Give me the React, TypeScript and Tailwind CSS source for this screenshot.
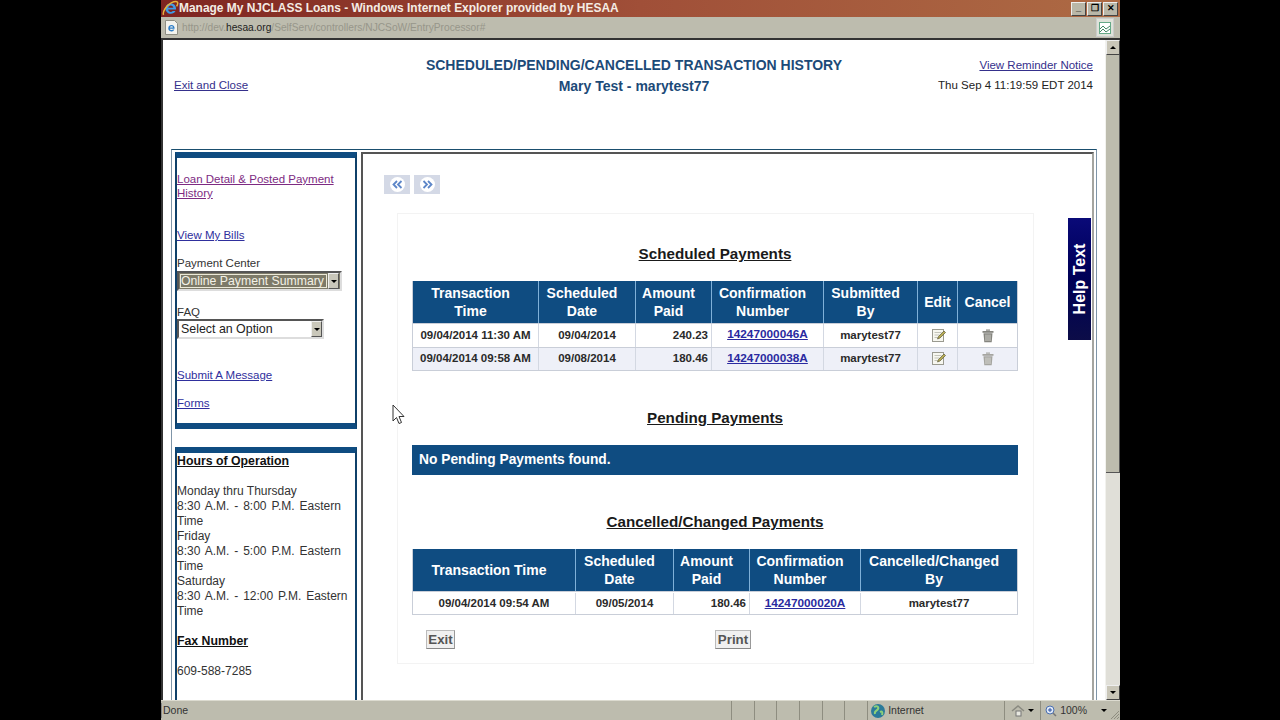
const font = { fontFamily: '"Liberation Sans", Arial, sans-serif' };

function IeLogo({ size = 17 }: { size?: number }) {
  return (
    <svg width={size} height={size} viewBox="0 0 16 16" className="shrink-0">
      <path d="M8.300 3a5 5 0 0 0-5 5c0 3 2.200 5 5 5 2 0 3.600-1 4.400-2.600h-2.600c-.5.600-1.100.9-1.800.9-1.300 0-2.400-.9-2.500-2.300h7.400V8a5 5 0 0 0-4.900-5zM5.900 7.200C6.100 6 7.100 5.100 8.300 5.100s2.200.9 2.400 2.100z" fill="#3f9be6" />
      <path d="M1.500 14C.2 11.500 4 5 9 2.500c3-1.500 5.800-1.700 5.800.5 0 1-.5 2-1 3" fill="none" stroke="#e8b33c" strokeWidth="1.400" />
    </svg>
  );
}

function PageLogo() {
  return (
    <svg width="15" height="17" viewBox="0 0 15 17" className="shrink-0">
      <path d="M1.500 1.500h9l3 3v11h-12z" fill="#f4f4ee" stroke="#8f8f84" />
      <path d="M7.500 6a3.200 3.200 0 1 0 2.900 4.500H8.800c-.3.400-.8.600-1.300.6-.9 0-1.500-.6-1.600-1.400h4.700c.2-2-1.200-3.700-3.100-3.700zM6 8.600c.1-.8.700-1.300 1.500-1.300s1.400.5 1.500 1.300z" fill="#2f7fc8" />
    </svg>
  );
}

function Dropdown({ label, w, dark, size }: { label: string; w: string; dark?: boolean; size: string }) {
  return (
    <div className={`${w} h-[20px] flex items-center border-2 border-t-[#555] border-l-[#555] border-r-[#ddd] border-b-[#ddd] ${dark ? "bg-[#7d7a68] p-px" : "bg-white"}`}>
      <div className={`flex-1 h-full flex items-center ${size} leading-none whitespace-nowrap ${dark ? "text-[#f3f1e6] border border-[#ece9d8]" : "text-[#222] pl-[2px]"}`}>{label}</div>
      <div className="w-[11px] h-[16px] ml-px bg-[#c9c7ba] border border-t-[#eee] border-l-[#eee] border-r-[#555] border-b-[#555] flex items-center justify-center">
        <div className="w-0 h-0 border-x-[3px] border-x-transparent border-t-[3px] border-t-black" />
      </div>
    </div>
  );
}

function EditIcon() {
  return (
    <svg width="16" height="15" viewBox="0 0 16 15" className="mx-auto block translate-x-px">
      <rect x="1.500" y="1.500" width="11" height="12" fill="#f7f7f0" stroke="#9a9a90" />
      <path d="M3.500 4.500h7M3.500 7h5M3.500 9.500h4" stroke="#c4c4ba" />
      <path d="M6.500 11l1-2.500 5.500-5.500 1.500 1.500-5.500 5.500z" fill="#b8ad55" stroke="#5e5a38" strokeWidth=".7" />
    </svg>
  );
}

function TrashIcon({ light }: { light?: boolean }) {
  const c = light ? "#a5a5a0" : "#85857f";
  return (
    <svg width="14" height="15" viewBox="0 0 14 15" className="mx-auto block">
      <path d="M5 1.500h4v1.200H5z" fill={c} />
      <path d="M1.500 3h11v1.800h-11z" fill={c} />
      <path d="M2.500 5.200h9l-.8 9H3.300z" fill={c} />
      <path d="M5 6.500v6.500M7 6.500v6.500M9 6.500v6.500" stroke="#e4e4e0" strokeWidth=".8" />
    </svg>
  );
}

function Th({ w, tight, children }: { w: string; tight?: boolean; children: React.ReactNode }) {
  return (
    <div className={`${w} shrink-0 h-full flex items-center justify-center text-center text-white font-bold text-[14px] leading-[18px] border-r border-[#7fb0d8] last:border-r-0 ${tight ? "" : "pr-[10px]"}`}>
      <span>{children}</span>
    </div>
  );
}

function Td({ w, right, children }: { w: string; right?: boolean; children: React.ReactNode }) {
  return (
    <div className={`${w} shrink-0 h-full flex items-center ${right ? "justify-end pr-[3px]" : "justify-center"} text-[11.500px] font-bold text-[#2a2a2a] border-r border-[#d3d8e2] last:border-r-0`}>
      {children}
    </div>
  );
}

function Conf({ n }: { n: string }) {
  return <a className="text-[11.800px] text-[#2a2aa0] underline">{n}</a>;
}

function Heading({ children }: { children: React.ReactNode }) {
  return <div className="text-center text-[15.200px] leading-[18px] font-bold text-[#1a1a1a] underline">{children}</div>;
}

function Scheduled() {
  const cols = ["w-[126px]", "w-[97px]", "w-[76px]", "w-[112px]", "w-[94px]", "w-[40px]", "w-[59px]"];
  const rows = [
    ["09/04/2014 11:30 AM", "09/04/2014", "240.23", "14247000046A", false],
    ["09/04/2014 09:58 AM", "09/08/2014", "180.46", "14247000038A", true],
  ] as const;
  return (
    <div className="border border-[#c9ced8] border-t-0">
      <div className="flex h-[42px] bg-[#0f4c81]">
        <Th w={cols[0]}>Transaction<br />Time</Th>
        <Th w={cols[1]}>Scheduled<br />Date</Th>
        <Th w={cols[2]}>Amount<br />Paid</Th>
        <Th w={cols[3]}>Confirmation<br />Number</Th>
        <Th w={cols[4]}>Submitted<br />By</Th>
        <Th w={cols[5]} tight>Edit</Th>
        <Th w={cols[6]} tight>Cancel</Th>
      </div>
      {rows.map((r, i) => (
        <div key={i} className={`flex h-[23.500px] border-t border-[#c9ced8] ${r[4] ? "bg-[#eef0f8]" : "bg-white"}`}>
          <Td w={cols[0]}>{r[0]}</Td>
          <Td w={cols[1]}>{r[1]}</Td>
          <Td w={cols[2]} right>{r[2]}</Td>
          <Td w={cols[3]}><Conf n={r[3]} /></Td>
          <Td w={cols[4]}>marytest77</Td>
          <Td w={cols[5]}><EditIcon /></Td>
          <Td w={cols[6]}><TrashIcon light={r[4]} /></Td>
        </div>
      ))}
    </div>
  );
}

function Cancelled() {
  const cols = ["w-[163px]", "w-[98px]", "w-[76px]", "w-[111px]", "w-[156px]"];
  return (
    <div className="border border-[#c9ced8] border-t-0">
      <div className="flex h-[42px] bg-[#0f4c81]">
        <Th w={cols[0]}>Transaction Time</Th>
        <Th w={cols[1]}>Scheduled<br />Date</Th>
        <Th w={cols[2]}>Amount<br />Paid</Th>
        <Th w={cols[3]}>Confirmation<br />Number</Th>
        <Th w={cols[4]}>Cancelled/Changed<br />By</Th>
      </div>
      <div className="flex h-[23px] pt-[1px] border-t border-[#c9ced8] bg-white">
        <Td w={cols[0]}>09/04/2014 09:54 AM</Td>
        <Td w={cols[1]}>09/05/2014</Td>
        <Td w={cols[2]} right>180.46</Td>
        <Td w={cols[3]}><Conf n="14247000020A" /></Td>
        <Td w={cols[4]}>marytest77</Td>
      </div>
    </div>
  );
}

function GrayButton({ children, w }: { children: React.ReactNode; w: string }) {
  return (
    <div className={`${w} h-[19px] flex items-center justify-center text-[13.300px] font-bold text-[#555] bg-[#f0f0f0] border border-[#bbb] border-r-[#999] border-b-[#888]`}>
      {children}
    </div>
  );
}

function NavBtn({ dir }: { dir: "l" | "r" }) {
  return (
    <div className="w-[26px] h-[19px] bg-[#d4d9e6] flex items-center justify-center">
      <div className="w-[15px] h-[15px] rounded-full bg-white flex items-center justify-center">
        <svg width="11" height="9" viewBox="0 0 11 9">
          <path d={dir === "l" ? "M5 1L1.500 4.500 5 8M9.500 1L6 4.500 9.500 8" : "M1.500 1L5 4.500 1.500 8M6 1L9.500 4.500 6 8"} fill="none" stroke="#5d86c8" strokeWidth="1.800" />
        </svg>
      </div>
    </div>
  );
}

function Sidebar() {
  return (
    <div className="w-[182px] shrink-0 flex flex-col">
      <div className="h-[277px] shrink-0 border-x-2 border-x-[#0f4069] border-t-[6px] border-t-[#0f4c81] border-b-[6px] border-b-[#0f4c81] text-[11.500px] leading-[14px] pt-[14px]">
        <a className="block text-[#7d2a82] underline">Loan Detail &amp; Posted Payment<br />History</a>
        <a className="block mt-[28px] text-[#2f2f9d] underline">View My Bills</a>
        <div className="mt-[14px] text-[#333]">Payment Center</div>
        <div className="mt-px"><Dropdown label="Online Payment Summary" w="w-[165px]" size="text-[12.250px]" dark /></div>
        <div className="mt-[14px] text-[#333]">FAQ</div>
        <div className="mt-0"><Dropdown label="Select an Option" w="w-[147px]" size="text-[12.400px]" /></div>
        <a className="block mt-[29px] text-[#2f2f9d] underline">Submit A Message</a>
        <a className="block mt-[14px] text-[#2f2f9d] underline">Forms</a>
      </div>
      <div className="mt-[18px] flex-1 border-x-2 border-x-[#0f4069] border-t-[6px] border-t-[#0f4c81] text-[12px] leading-[15px] text-[#333] pt-[1px]">
        <div className="text-[12.300px] font-bold text-[#111] underline">Hours of Operation</div>
        <div className="mt-[15px]">
          Monday thru Thursday<br />
          <span className="[word-spacing:1.600px]">8:30 A.M. - 8:00 P.M. Eastern</span><br />
          Time<br />
          Friday<br />
          <span className="[word-spacing:1.600px]">8:30 A.M. - 5:00 P.M. Eastern</span><br />
          Time<br />
          Saturday<br />
          <span className="[word-spacing:1.600px]">8:30 A.M. - 12:00 P.M. Eastern</span><br />
          Time
        </div>
        <div className="mt-[15px] text-[12.300px] font-bold text-[#111] underline">Fax Number</div>
        <div className="mt-[15px]">609-588-7285</div>
      </div>
    </div>
  );
}

function Main() {
  return (
    <div className="flex-1 ml-[4px] border-l-2 border-l-[#555] border-t-2 border-t-[#555] border-r-2 border-r-[#a5a5a0] pl-[21px] pt-[21px] relative min-w-0">
      <div className="flex gap-[4px]">
        <NavBtn dir="l" />
        <NavBtn dir="r" />
      </div>
      <div className="w-[637px] h-[451px] ml-[13px] mt-[19px] border border-[#f3f3f3] pt-[31px] pl-[14px]">
        <div className="w-[606px]">
          <Heading>Scheduled Payments</Heading>
          <div className="mt-[18px]"><Scheduled /></div>
          <div className="mt-[38px]"><Heading>Pending Payments</Heading></div>
          <div className="mt-[18px] h-[30px] bg-[#0f4c81] flex items-center pl-[7px] text-white font-bold text-[13.800px]">No Pending Payments found.</div>
          <div className="mt-[38px]"><Heading>Cancelled/Changed Payments</Heading></div>
          <div className="mt-[18px]"><Cancelled /></div>
          <div className="mt-[15px] flex">
            <div className="ml-[14px]"><GrayButton w="w-[29px]">Exit</GrayButton></div>
            <div className="ml-[260px]"><GrayButton w="w-[36px]">Print</GrayButton></div>
          </div>
        </div>
      </div>
      <div className="absolute left-[705px] top-[64px] w-[23px] h-[122px] bg-gradient-to-b from-[#0a0a78] via-[#000055] to-[#0c0c48] flex items-center justify-center">
        <span className="text-white font-bold text-[16px] leading-none whitespace-nowrap -rotate-90 translate-x-px">Help Text</span>
      </div>
      <svg width="14" height="22" viewBox="0 0 14 22" className="absolute left-[29px] top-[250px]">
        <path d="M1 1v16l3.500-3.500 2.500 6 2.500-1-2.500-6h5z" fill="#fff" stroke="#333" strokeWidth="1" />
      </svg>
    </div>
  );
}

function ScrollBtn({ up }: { up?: boolean }) {
  return (
    <div className="h-[15px] shrink-0 bg-[#c9c6b8] border border-t-[#eee] border-l-[#eee] border-r-[#444] border-b-[#444] flex items-center justify-center">
      <div className={`w-0 h-0 border-x-[3px] border-x-transparent ${up ? "border-b-[3px] border-b-black" : "border-t-[3px] border-t-black"}`} />
    </div>
  );
}

export default function App() {
  return (
    <div className="w-[1280px] h-[720px] bg-black flex overflow-hidden" style={font}>
      <div className="w-[161px] shrink-0" />
      <div className="w-[959px] shrink-0 flex flex-col bg-white">
        <div className="h-[17px] shrink-0 bg-gradient-to-r from-[#7e2420] via-[#a04f38] to-[#ad6a44] flex items-center pl-[1px] pr-[2px]">
          <IeLogo />
          <span className="text-[11.950px] font-bold text-[#f4ece4] whitespace-nowrap">Manage My NJCLASS Loans - Windows Internet Explorer provided by HESAA</span>
          <div className="ml-auto flex gap-[1px]">
            {["_", "❐", "✕"].map((g) => (
              <div key={g} className="w-[15px] h-[14px] bg-[#b9b7a8] border border-t-[#eee] border-l-[#eee] border-r-[#444] border-b-[#444] flex items-center justify-center text-[9px] leading-none font-bold text-black">{g}</div>
            ))}
          </div>
        </div>
        <div className="h-[23px] shrink-0 bg-[#bdbcae] border-b-2 border-b-[#333] flex items-center pl-[3px] pr-[6px]">
          <div className="flex-1 h-[19px] flex items-center">
            <PageLogo />
            <span className="ml-[3px] text-[10.200px] text-[#97968a] whitespace-nowrap">http://dev.<span className="text-[#222]">hesaa.org</span>/SelfServ/controllers/NJCSoW/EntryProcessor#</span>
          </div>
          <div className="w-[18px] h-[19px] bg-[#dfe3da] border border-[#ccc] flex items-center justify-center">
            <svg width="12" height="12" viewBox="0 0 12 12"><rect x=".5" y=".5" width="11" height="11" fill="#fff" stroke="#6a8" /><path d="M1 7l3-3 3 3 4-3M1 10l3-3 3 3 4-3" fill="none" stroke="#486" /></svg>
          </div>
        </div>
        <div className="flex-1 min-h-0 flex">
          <div className="flex-1 min-w-0 border-l-2 border-l-[#333] flex flex-col overflow-hidden">
            <div className="h-[109px] shrink-0 flex pt-[15px] pl-[11px] pr-[12px]">
              <div className="w-[240px] shrink-0 pt-[17px]">
                <a className="text-[11.500px] leading-[18px] text-[#35308c] underline">Exit and Close</a>
              </div>
              <div className="w-[440px] shrink-0 text-center text-[14px] leading-[20px] font-bold text-[#1c4a78]">
                <div className="whitespace-nowrap">SCHEDULED/PENDING/CANCELLED TRANSACTION HISTORY</div>
                <div className="mt-[1px]">Mary Test - marytest77</div>
              </div>
              <div className="flex-1 text-right text-[11.500px] leading-[20px] text-[#222]">
                <a className="block text-[#35308c] underline">View Reminder Notice</a>
                <div>Thu Sep 4 11:19:59 EDT 2014</div>
              </div>
            </div>
            <div className="flex-1 min-h-0 ml-[8px] mr-[8px] border-l border-l-[#7f95a8] border-r border-r-[#7f95a8] border-t border-t-[#1a4e6e] pt-[2px] pl-[3px] pr-[2px] flex">
              <Sidebar />
              <Main />
            </div>
          </div>
          <div className="w-[15px] shrink-0 bg-[#e0dfd8] flex flex-col border-l border-[#f2f2ee]">
            <ScrollBtn up />
            <div className="flex-1 min-h-0">
              <div className="h-[418px] bg-[#bdbcae] border-r border-b border-r-[#555] border-b-[#555]" />
            </div>
            <ScrollBtn />
          </div>
        </div>
        <div className="h-[20px] shrink-0 bg-[#bdbcae] border-t border-t-[#dcdbd0] flex items-center text-[10.500px] text-[#333]">
          <div className="w-[570px] pl-[1px] border-l border-[#888]">Done</div>
          <div className="flex h-full">
            {[0, 1, 2, 3, 4, 5].map((i) => (
              <div key={i} className="w-[21.700px] h-full border-l border-[#8e8d80] mr-px" />
            ))}
          </div>
          <div className="w-[137px] h-full border-l border-[#8e8d80] flex items-center pl-[2px]">
            <svg width="16" height="16" viewBox="0 0 16 16"><circle cx="8" cy="8" r="7" fill="#2b7a99" /><path d="M4 4c3-2 5 0 4 2S4 8 5 11M10 9c2-1 3 0 2 3" fill="none" stroke="#8fd07a" strokeWidth="2" /></svg>
            <span className="ml-[2px]">Internet</span>
          </div>
          <div className="w-[36px] h-full border-l border-[#8e8d80] flex items-center pl-[6px]">
            <svg width="14" height="14" viewBox="0 0 14 14"><path d="M1 7l6-5 6 5" fill="none" stroke="#8a8a80" strokeWidth="1.500" /><rect x="5" y="7" width="5" height="5" fill="#e8e8e0" stroke="#777" /></svg>
            <div className="ml-[3px] w-0 h-0 border-x-[3px] border-x-transparent border-t-[3px] border-t-black" />
          </div>
          <div className="flex-1 h-full border-l border-[#8e8d80] flex items-center pl-[4px] relative">
            <svg width="12" height="12" viewBox="0 0 12 12"><circle cx="5" cy="5" r="4" fill="#dfe8f7" stroke="#4a6fb0" /><path d="M3 5h4M5 3v4" stroke="#2a50a0" /><path d="M8 8l3 3" stroke="#777" strokeWidth="1.500" /></svg>
            <span className="ml-[3px]">100%</span>
            <div className="ml-[14px] w-0 h-0 border-x-[3px] border-x-transparent border-t-[3px] border-t-black" />
            <svg width="10" height="10" viewBox="0 0 10 10" className="absolute right-0 bottom-0"><path d="M9 1L1 9M9 4L4 9M9 7L7 9" stroke="#8e8d80" /></svg>
          </div>
        </div>
      </div>
      <div className="flex-1" />
    </div>
  );
}
